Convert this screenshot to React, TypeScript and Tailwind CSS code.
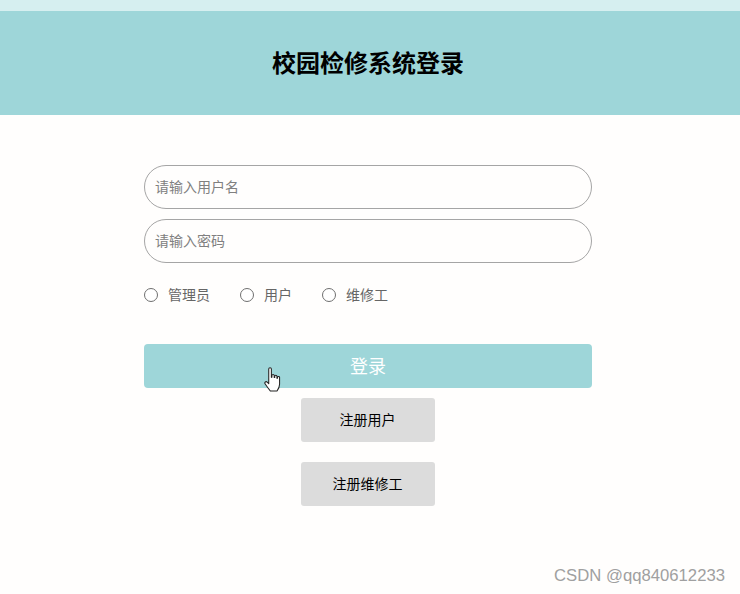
const cjk = "font-['Noto_Sans_CJK_SC','Noto_Sans',sans-serif]";

function Radio({ label, className }: { label: string; className: string }) {
  return (
    <label className={`flex items-center ${className}`}>
      <span className="w-[14px] h-[14px] rounded-full border border-[#6f6f6f] bg-white" />
      <span className="ml-[10px] text-[14px] leading-[14px] pb-[2px] text-[#666]">{label}</span>
    </label>
  );
}

function Cursor() {
  return (
    <svg className="absolute left-[264px] top-[366px]" width="20" height="28" viewBox="0 0 19 26">
      <path
        d="M4.5 2.5c0-1.6 2.5-1.6 2.5 0v8l0.5-.2v-1.6c0-1.3 2.2-1.3 2.2 0v2l.5 0v-1.2c0-1.3 2.1-1.3 2.1 0v1.8l.5 0v-.8c0-1.2 2-1.2 2 0v6.5c0 3-1.5 5-2.5 6.5h-6.3c-1.5-2-3-4-5-7-.8-1.2.8-2.6 2-1.5l1.5 1.5z"
        fill="#fff"
        stroke="#222"
        strokeWidth="1"
        strokeLinejoin="round"
      />
    </svg>
  );
}

export default function App() {
  return (
    <div className={`relative h-[594px] w-[740px] overflow-hidden bg-[#fffefd] ${cjk}`}>
      <div className="h-[11px] bg-[#d6eff0]" />
      <header className="h-[104px] bg-[#9ed6d9] flex items-center justify-center pb-[2px]">
        <h1 className="text-[24px] leading-[30px] font-bold text-black ml-[-4px]">校园检修系统登录</h1>
      </header>

      <main className="w-[448px] ml-[144px] pt-[50px]">
        <div className="flex flex-col gap-[10px]">
          <input
            placeholder="请输入用户名"
            className="h-[44px] w-full rounded-[22px] border border-[#a5a5a5] px-[10px] pb-[2px] text-[14px] bg-transparent placeholder:text-[#808080] outline-none"
          />
          <input
            placeholder="请输入密码"
            className="h-[44px] w-full rounded-[22px] border border-[#a5a5a5] px-[10px] pb-[2px] text-[14px] bg-transparent placeholder:text-[#808080] outline-none"
          />
        </div>

        <div className="flex mt-[24px] h-[16px]">
          <Radio label="管理员" className="w-[96px]" />
          <Radio label="用户" className="w-[82px]" />
          <Radio label="维修工" className="" />
        </div>

        <button className="mt-[41px] h-[44px] w-full rounded-[4px] bg-[#9ed6d9] text-white text-[18px] pb-[2px]">
          登录
        </button>

        <div className="flex flex-col items-center gap-[20px] mt-[10px]">
          <button className="h-[44px] w-[134px] ml-[-1px] rounded-[3px] bg-[#dcdcdc] text-black text-[14px] pb-[2px]">
            注册用户
          </button>
          <button className="h-[44px] w-[134px] ml-[-1px] rounded-[3px] bg-[#dcdcdc] text-black text-[14px] pb-[2px]">
            注册维修工
          </button>
        </div>
      </main>

      <Cursor />
      <div className="absolute right-[15px] top-[567px] font-['Liberation_Sans',sans-serif] text-[16.7px] leading-[18px] text-[#a0a0a0]">
        CSDN @qq840612233
      </div>
    </div>
  );
}
